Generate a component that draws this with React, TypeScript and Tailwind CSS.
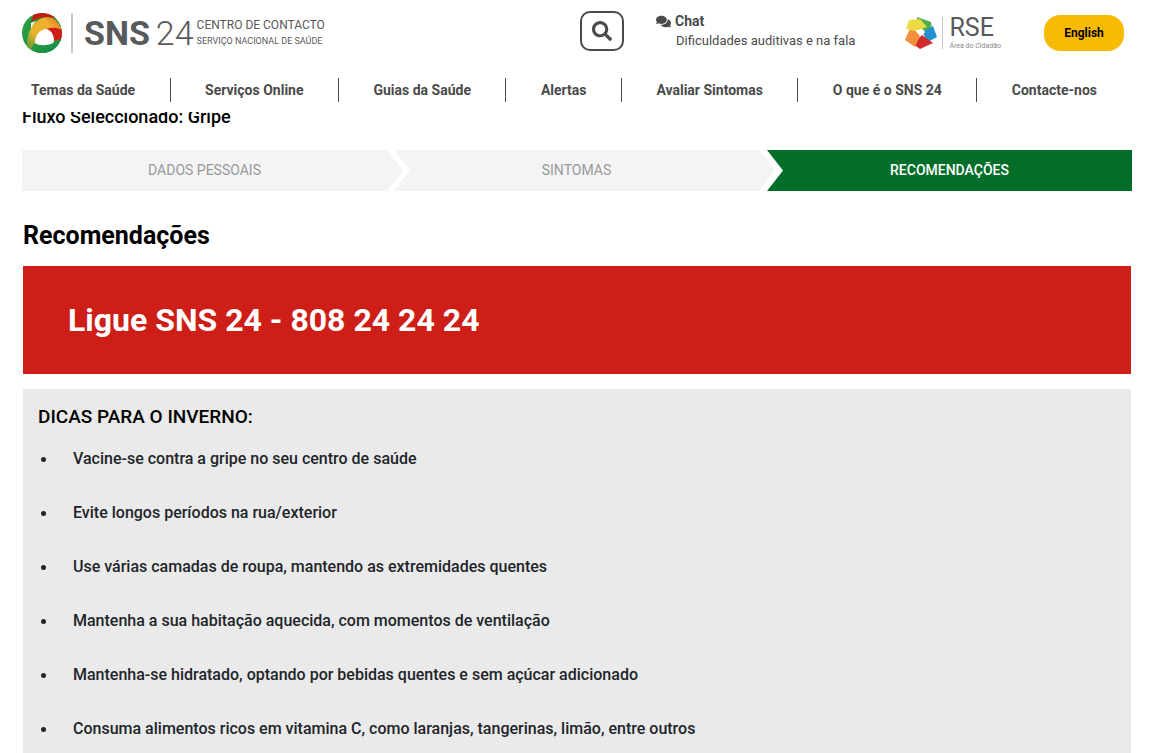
import { Fragment } from 'react';
import { FaComments, FaSearch } from 'react-icons/fa';

const menu = [
  'Temas da Saúde',
  'Serviços Online',
  'Guias da Saúde',
  'Alertas',
  'Avaliar Sintomas',
  'O que é o SNS 24',
  'Contacte-nos',
];

const tips = [
  'Vacine-se contra a gripe no seu centro de saúde',
  'Evite longos períodos na rua/exterior',
  'Use várias camadas de roupa, mantendo as extremidades quentes',
  'Mantenha a sua habitação aquecida, com momentos de ventilação',
  'Mantenha-se hidratado, optando por bebidas quentes e sem açúcar adicionado',
  'Consuma alimentos ricos em vitamina C, como laranjas, tangerinas, limão, entre outros',
];

function SnsMark() {
  return (
    <svg viewBox="0 0 40 40" className="size-10 shrink-0" aria-hidden="true">
      <defs>
        <linearGradient id="gold" x1="0" y1="1" x2="1" y2="0">
          <stop offset="0" stopColor="#4f9638" />
          <stop offset="0.35" stopColor="#e3b32c" />
          <stop offset="0.7" stopColor="#f2b02e" />
          <stop offset="1" stopColor="#d8651c" />
        </linearGradient>
        <linearGradient id="green" x1="0" y1="0" x2="1" y2="1">
          <stop offset="0" stopColor="#2f9e3f" />
          <stop offset="1" stopColor="#0c8a4a" />
        </linearGradient>
        <clipPath id="disc">
          <circle cx="20" cy="20" r="20" />
        </clipPath>
      </defs>
      <g clipPath="url(#disc)">
        <rect width="40" height="40" fill="url(#green)" />
        <path d="M9 9 L12 0 H34 L36 7 C28 2 18 4 9 9Z" fill="#c41a12" />
        <path d="M5 36 C4 22 9 11 18 6 C28 2 36 5 40 18 L24 17 C16 20 12 27 14 37Z" fill="url(#gold)" />
        <path d="M24 16 C30 14 36 14 42 18 V27 L31 29Z" fill="#d1201a" />
        <path d="M9 10 L14 8 C12 10 10 13 9 16Z" fill="#fff" />
        <path d="M9 38 C10 32 12 30 14 30 C20 32 27 31 32 28 L40 26 V42 H9Z" fill="url(#green)" />
        <path d="M13 30 C13 22 18 16 25 16 C30 18 32 23 32 28 C32 32 18 34 13 30Z" fill="#fff" />
      </g>
    </svg>
  );
}

function RseMark() {
  return (
    <svg viewBox="0 0 32 32" className="size-8 shrink-0" aria-hidden="true">
      <polygon points="12,0 26,5 27,13 19,14 12,6" fill="#4fb04b" />
      <polygon points="17,15 28,9 32,20 23,25" fill="#2590d0" />
      <polygon points="17,18 28,26 15,32 8,27" fill="#d42a2c" />
      <polygon points="6,9 15,19 10,30 0,23" fill="#f3903d" />
      <polygon points="4,3 15,2 22,10 10,14 1,12" fill="#ebdc46" />
      <polygon points="15,14 18,13 20,15 18,18 15,18" fill="#fff" />
    </svg>
  );
}

function Header() {
  return (
    <header className="sticky top-0 z-10 bg-white text-[#4a4a4a]">
      <div className="flex h-[66px] items-center pr-[25px] pl-[22px]">
        <a href="#inicio" className="flex items-center text-[#58595b]">
          <SnsMark />
          <span className="mr-[11px] ml-[9px] h-10 w-0.5 bg-[#c8c8c8]" />
          <span className="flex items-center text-[34px] leading-10">
            <b>SNS</b>
            <span className="ml-1.5 font-light">24</span>
          </span>
          <span className="ml-[3px] flex flex-col">
            <span className="text-[12px] leading-4">CENTRO DE CONTACTO</span>
            <span className="text-[9px] leading-4">SERVIÇO NACIONAL DE SAÚDE</span>
          </span>
        </a>
        <div className="ml-auto flex items-center">
          <div className="flex items-center pb-1">
            <button
              type="button"
              aria-label="Pesquisar"
              className="flex h-10 w-11 items-center justify-center rounded-[10px] border-2 border-[#4a4a4a]"
            >
              <FaSearch size={20} />
            </button>
            <a href="#chat" className="ml-8 leading-[19px]">
              <span className="flex items-center gap-1 text-[14px] font-bold">
                <FaComments size={15} /> Chat
              </span>
              <span className="block pl-5 text-[13px]">Dificuldades auditivas e na fala</span>
            </a>
          </div>
          <a href="#rse" className="ml-[50px] flex items-center text-[#58595b]">
            <RseMark />
            <span className="mr-[6px] ml-[5px] h-8 w-px bg-[#c8c8c8]" />
            <span className="flex flex-col">
              <span className="text-[25px] leading-[26px]">RSE</span>
              <span className="text-[7px] leading-[10px] text-[#888]">Área do Cidadão</span>
            </span>
          </a>
          <button
            type="button"
            className="ml-[43px] h-9 w-20 rounded-2xl bg-[#f9ba04] text-[12px] font-bold text-black"
          >
            English
          </button>
        </div>
      </div>
      <nav className="pt-3 pb-[10px]">
        <ul className="flex items-center justify-between pr-[52px] pl-[31px] text-[14px] font-bold">
          {menu.map((item, index) => (
            <Fragment key={item}>
              {index > 0 && <li aria-hidden="true" className="h-6 w-px bg-[#4a4a4a]" />}
              <li>
                <a href="#menu">{item}</a>
              </li>
            </Fragment>
          ))}
        </ul>
      </nav>
    </header>
  );
}

function Steps() {
  return (
    <ol className="mt-[21px] grid grid-cols-3 text-center text-[14px] leading-[41px] text-[#999]">
      <li className="-mr-[11px] bg-[#f4f4f4] pr-4 [clip-path:polygon(0_0,calc(100%-16px)_0,100%_50%,calc(100%-16px)_100%,0_100%)]">
        DADOS PESSOAIS
      </li>
      <li className="-mr-[13px] ml-[2px] bg-[#f4f4f4] pr-4 [clip-path:polygon(0_0,calc(100%-16px)_0,100%_50%,calc(100%-16px)_100%,0_100%,16px_50%)]">
        SINTOMAS
      </li>
      <li
        aria-current="step"
        className="ml-[5px] bg-[#036d2a] font-medium text-white [clip-path:polygon(0_0,100%_0,100%_100%,0_100%,16px_50%)]"
      >
        RECOMENDAÇÕES
      </li>
    </ol>
  );
}

export default function App() {
  return (
    <div className="flex min-h-screen flex-col bg-white font-[Roboto,sans-serif] text-black">
      <Header />
      <main className="-mt-[7px] flex flex-1 flex-col pr-[17px] pl-[22px]">
        <h1 className="text-[18px] leading-6 font-medium">Fluxo Seleccionado: Gripe</h1>
        <Steps />
        <section className="flex flex-1 flex-col px-px">
          <h2 className="mt-[29px] text-[25px] leading-8 font-bold">Recomendações</h2>
          <div className="mt-[14px] bg-[#ce1e18] px-[45px] py-[34px] text-[32px] leading-10 font-bold text-white">
            Ligue SNS 24 - 808 24 24 24
          </div>
          <div className="mt-[15px] flex-1 bg-[#eaeaea] px-[15px] pt-4 pb-[11px]">
            <h3 className="text-[19px] leading-6 font-medium">DICAS PARA O INVERNO:</h3>
            <ul className="mt-[18px] flex flex-col gap-[30px] text-[16px] leading-6 font-medium text-[#212529]">
              {tips.map((tip) => (
                <li key={tip} className="flex items-center gap-[27px] pl-[3px]">
                  <span className="size-[5px] rounded-full bg-[#212529]" />
                  {tip}
                </li>
              ))}
            </ul>
          </div>
        </section>
      </main>
    </div>
  );
}
